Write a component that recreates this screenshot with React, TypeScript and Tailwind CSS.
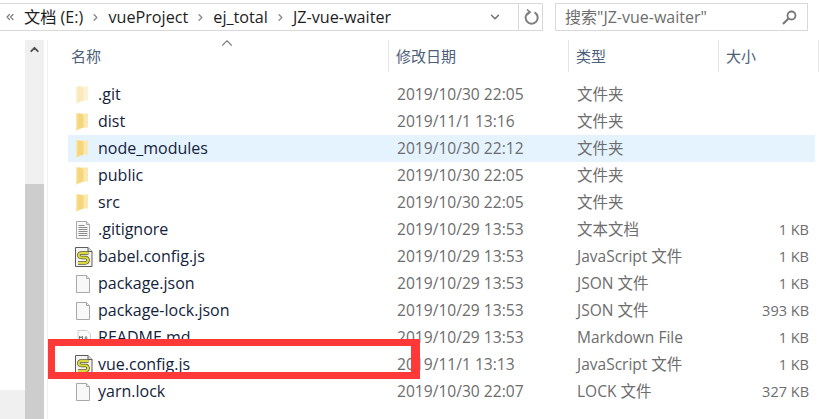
import { ChevronDown, ChevronRight, ChevronUp, ChevronsLeft } from "lucide-react";

type Kind = "folder" | "hidden" | "file" | "text" | "js" | "md";

const rows: { name: string; date: string; type: string; size?: string; kind: Kind; active?: boolean }[] = [
  { name: ".git", date: "2019/10/30 22:05", type: "文件夹", kind: "hidden" },
  { name: "dist", date: "2019/11/1 13:16", type: "文件夹", kind: "folder" },
  { name: "node_modules", date: "2019/10/30 22:12", type: "文件夹", kind: "folder", active: true },
  { name: "public", date: "2019/10/30 22:05", type: "文件夹", kind: "folder" },
  { name: "src", date: "2019/10/30 22:05", type: "文件夹", kind: "folder" },
  { name: ".gitignore", date: "2019/10/29 13:53", type: "文本文档", size: "1 KB", kind: "text" },
  { name: "babel.config.js", date: "2019/10/29 13:53", type: "JavaScript 文件", size: "1 KB", kind: "js" },
  { name: "package.json", date: "2019/10/29 13:53", type: "JSON 文件", size: "1 KB", kind: "file" },
  { name: "package-lock.json", date: "2019/10/29 13:53", type: "JSON 文件", size: "393 KB", kind: "file" },
  { name: "README.md", date: "2019/10/29 13:53", type: "Markdown File", size: "1 KB", kind: "md" },
  { name: "vue.config.js", date: "2019/11/1 13:13", type: "JavaScript 文件", size: "1 KB", kind: "js" },
  { name: "yarn.lock", date: "2019/10/30 22:07", type: "LOCK 文件", size: "327 KB", kind: "file" },
];

function FileIcon({ kind }: { kind: Kind }) {
  if (kind === "folder" || kind === "hidden") {
    return (
      <svg width="18" height="18" viewBox="0 0 18 18" className={kind === "hidden" ? "opacity-50" : ""}>
        <path d="M4 .5h9v14H4z" fill="#fbe8ae" />
        <path d="M1 .5h4l3.500 1.500v12.500L1 17.500z" fill="#f5d67c" />
        <path d="M1 .5h1.500v16.500L1 17.500z" fill="#fae6a6" />
      </svg>
    );
  }
  if (kind === "md") {
    return (
      <svg width="18" height="18" viewBox="0 0 18 18">
        <path d="M3 1.500h9l3.500 3.500v11.500H3z" fill="#fafafa" stroke="#d0d0d0" />
        <path d="M4.500 7v4M4.500 7l1.500 2 1.500-2v4M11 7v4M9.500 9h3" fill="none" stroke="#777" strokeWidth="1" />
      </svg>
    );
  }
  if (kind === "js") {
    return (
      <svg width="18" height="20" viewBox="0 0 18 20" className="shrink-0">
        <path d="M.5.5h12.500l4 4v15H.5z" fill="#f4f4f4" stroke="#5c5c5c" />
        <path d="M13 .5v4h4" fill="#dcdcdc" stroke="#5c5c5c" />
        <path d="M13.500 6H6C3 6 3 10.500 6.500 10.500h4c3.500 0 3.500 5.500-.5 5.500H3" fill="none" stroke="#5a5a28" strokeWidth="3.400" />
        <path d="M13.500 6H6C3 6 3 10.500 6.500 10.500h4c3.500 0 3.500 5.500-.5 5.500H3" fill="none" stroke="#dcd840" strokeWidth="2" />
      </svg>
    );
  }
  return (
    <svg width="18" height="18" viewBox="0 0 18 18">
      <path d="M1.500 .5h10l3 3v14h-13z" fill="#f8f8f8" stroke="#a8a8a8" />
      <path d="M11.500 .5v3h3" fill="#e4e4e4" stroke="#a8a8a8" />
      {kind === "text" && (
        <path d="M3.500 4.500h6M3.500 6.500h9M3.500 8.500h9M3.500 10.500h9M3.500 12.500h9M3.500 14.500h9" stroke="#8b8b8b" strokeWidth="1" />
      )}
    </svg>
  );
}

function Crumb({ label }: { label: string }) {
  return (
    <>
      <ChevronRight className="w-[11px] h-[11px] mx-[7px] text-[#8a8a8a]" strokeWidth={3} />
      <span>{label}</span>
    </>
  );
}

export default function App() {
  return (
    <div
      className="relative w-[820px] h-[419px] overflow-hidden bg-white"
      style={{ fontFamily: '"Open Sans", "Noto Sans CJK SC", sans-serif' }}
    >
      {/* address and search */}
      <div className="flex h-[28px] mt-[3px]">
        <div className="w-[543px] flex items-center border-y border-r border-[#d9d9d9] text-[16.2px] text-[#1e1e1e]">
          <ChevronsLeft className="w-[12px] h-[12px] ml-[4px] mr-[8px] text-[#808080]" strokeWidth={2.500} />
          <span>文档 (E:)</span>
          <Crumb label="vueProject" />
          <Crumb label="ej_total" />
          <Crumb label="JZ-vue-waiter" />
          <ChevronDown className="w-[14px] h-[14px] ml-auto mr-[16px] text-[#707070]" strokeWidth={2.500} />
          <div className="h-full w-[24px] border-l border-[#d9d9d9] flex items-center justify-center">
            <svg width="16" height="16" viewBox="0 0 16 16" fill="none" stroke="#808080" strokeWidth="2">
              <path d="M6 3.300A6 6 0 1 0 11.500 3.400" />
              <path d="M4 .5L7.200 3.300 4 6" strokeWidth="1.600" />
            </svg>
          </div>
        </div>
        <div className="ml-[12px] w-[253px] flex items-center border border-[#d9d9d9] pl-[9px] pr-[10px] text-[16px] text-[#6d6d6d]">
          <span>搜索"JZ-vue-waiter"</span>
          <svg width="15" height="15" viewBox="0 0 15 15" fill="none" stroke="#787878" className="ml-auto">
            <circle cx="9.500" cy="5.500" r="4" strokeWidth="1.800" />
            <path d="M6.500 8.500L1 14" strokeWidth="2.200" />
          </svg>
        </div>
      </div>

      <div className="flex mt-[9px] h-[379px]">
        {/* left pane edge */}
        <div className="w-[25px] flex flex-col justify-end">
          <div className="h-[29px] bg-[#f0f0f0]" />
        </div>
        {/* scrollbar */}
        <div className="w-[19px] flex flex-col bg-[#f0f0f0]">
          <div className="h-[144px] pt-[2px] flex justify-center">
            <ChevronUp className="w-[13px] h-[13px] mt-[1px] text-[#505050]" strokeWidth={3.500} />
          </div>
          <div className="flex-1 bg-[#cdcdcd]" />
        </div>
        <div className="w-[3px]" />
        <div className="flex-1 border-l border-[#f0f0f0] pl-[20px]">
          {/* column headers */}
          <div className="relative flex h-[32px] text-[15px] text-[#4c607a]">
            <ChevronUp className="absolute left-[150px] -top-[6px] w-[18px] h-[18px] text-[#808080]" strokeWidth={1.500} />
            <div className="w-[321px] flex items-center pl-[3px] border-r border-[#e5e5e5]">名称</div>
            <div className="w-[180px] flex items-center pl-[7px] border-r border-[#e5e5e5]">修改日期</div>
            <div className="w-[150px] flex items-center pl-[7px] border-r border-[#e5e5e5]">类型</div>
            <div className="w-[100px] flex items-center pl-[7px] border-r border-[#e5e5e5]">大小</div>
          </div>
          {/* file rows */}
          <div className="mt-[9px] w-[747px]">
            {rows.map((r) => (
              <div key={r.name} className={`flex items-center h-[27px] ${r.active ? "bg-[#e5f3ff]" : ""}`}>
                <div className="w-[321px] flex items-center pl-[7px] gap-[5px] text-[16px] text-[#14233c] whitespace-nowrap">
                  <FileIcon kind={r.kind} />
                  <span className="pb-[1px]">{r.name}</span>
                </div>
                <div className="w-[180px] pl-[8px] text-[15.6px] text-[#6d6d6d] whitespace-nowrap">{r.date}</div>
                <div className="w-[150px] pl-[8px] text-[#6d6d6d] text-[15.5px] whitespace-nowrap">{r.type}</div>
                <div className="w-[90px] text-right text-[#6d6d6d] text-[14.5px] whitespace-nowrap">{r.size}</div>
              </div>
            ))}
          </div>
        </div>
      </div>

      {/* annotation drawn on top of the screenshot */}
      <div className="absolute left-[48px] top-[339px] w-[372px] h-[40px] border-y-[7px] border-l-[7px] border-r-[9px] border-[#ff3838]" />
    </div>
  );
}
